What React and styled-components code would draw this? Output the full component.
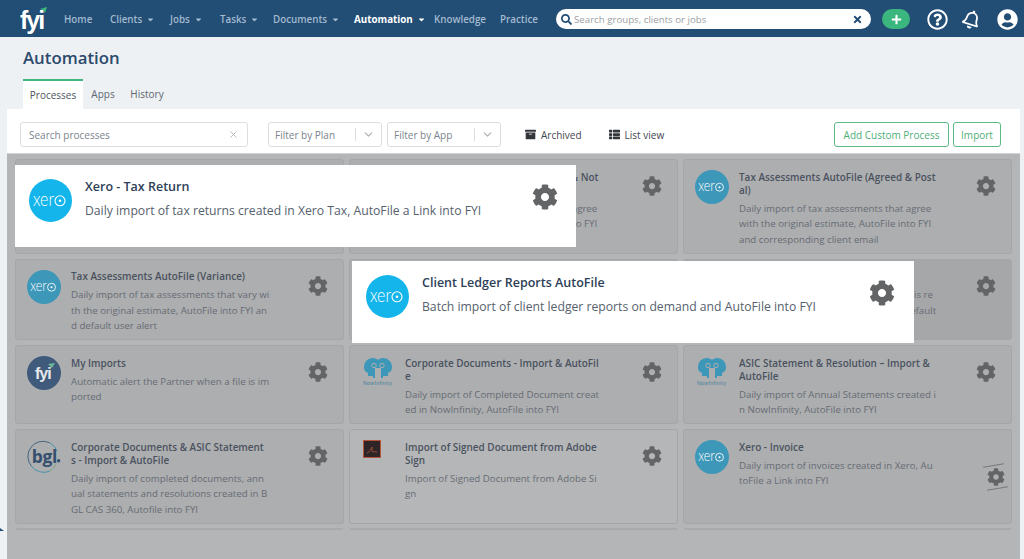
import React from "react";
import styled, { createGlobalStyle } from "styled-components";
import {
  FaArchive,
  FaCaretDown,
  FaCog,
  FaPlus,
  FaRegBell,
  FaRegQuestionCircle,
  FaSearch,
  FaThList,
  FaTimes,
  FaUserCircle,
} from "react-icons/fa";
import { ChevronDown, X } from "lucide-react";

const GlobalStyle = createGlobalStyle`
  html, body {
    margin: 0;
    padding: 0;
    height: 559px;
    overflow: hidden;
    background: #eef1f4;
    font-family: "Open Sans", "Noto Sans", "Liberation Sans", sans-serif;
  }
  * { box-sizing: border-box; }
`;

const Page = styled.div`
  width: 1024px;
  height: 559px;
  display: flex;
  flex-direction: column;
  overflow: hidden;
`;

const Nav = styled.header`
  height: 37px;
  flex: none;
  background: #224d75;
  display: flex;
  align-items: center;
  padding: 1px 0 0 20px;
`;

const NavLinks = styled.nav`
  display: flex;
  margin-left: 16px;
  width: 492px;
`;

const NavLink = styled.a`
  display: flex;
  align-items: center;
  gap: 4px;
  width: ${(p) => p.$w}px;
  font-size: 9.8px;
  white-space: nowrap;
  color: ${(p) => (p.$active ? "#ffffff" : "#a3bacf")};
  font-weight: ${(p) => (p.$active ? 700 : 600)};
  svg { font-size: 9px; flex: none; }
`;

const GlobalSearch = styled.div`
  width: 315px;
  height: 20px;
  border-radius: 10px;
  background: #fff;
  display: flex;
  align-items: center;
  padding: 0 8px 0 5px;
  color: #224d75;
  font-size: 11px;
  svg { flex: none; }
`;

const GlobalSearchText = styled.span`
  flex: 1;
  margin-left: 2px;
  color: #9b9fa3;
  font-size: 9.7px;
`;

const AddButton = styled.button`
  width: 28px;
  height: 20px;
  margin-left: 11px;
  border: 0;
  border-radius: 10px;
  background: #3cb67f;
  color: #fff;
  display: flex;
  align-items: center;
  justify-content: center;
  padding: 0;
  font-size: 11px;
`;

const NavIcons = styled.div`
  display: flex;
  align-items: center;
  margin-left: 17px;
  color: #fff;
`;

const HelpIcon = styled(FaRegQuestionCircle)`
  font-size: 21px;
`;

const BellIcon = styled(FaRegBell)`
  font-size: 19px;
  margin-left: 14px;
  transform: rotate(18deg);
`;

const UserIcon = styled(FaUserCircle)`
  font-size: 21px;
  margin-left: 16px;
`;

const PageTitle = styled.h1`
  margin: 0;
  padding: 11px 0 0 23px;
  height: 42px;
  font-size: 16.8px;
  line-height: 20px;
  font-weight: 600;
  color: #2c4a6c;
`;

const Tabs = styled.div`
  display: flex;
  height: 30px;
  padding-left: 23px;
`;

const Tab = styled.div`
  width: ${(p) => p.$w}px;
  font-size: 10px;
  color: #5d6670;
  text-align: center;
  line-height: ${(p) => (p.$active ? 29 : 30)}px;
  ${(p) =>
    p.$active &&
    `background: #fff; border-top: 2px solid #3fb77f; color: #4d5660;`}
`;

const Toolbar = styled.div`
  width: 1013px;
  margin-left: 7px;
  height: 44px;
  flex: none;
  background: #fff;
  display: flex;
  align-items: flex-start;
  padding: 13px 19px 0 13px;
  > * { flex: none; }
`;

const SearchInput = styled.div`
  width: 228px;
  height: 25px;
  border: 1px solid #dcdfe2;
  border-radius: 3px;
  display: flex;
  align-items: center;
  justify-content: space-between;
  padding: 0 8px;
  font-size: 10px;
  color: #7b848d;
  margin-right: 20px;
`;

const FilterSelect = styled.div`
  width: 114px;
  height: 25px;
  border: 1px solid #dcdfe2;
  border-radius: 3px;
  display: flex;
  align-items: center;
  padding-left: 6px;
  margin-right: 5px;
  font-size: 10px;
  color: #7b848d;
`;

const FilterLabel = styled.span`
  flex: 1;
`;

const FilterCaret = styled.span`
  width: 26px;
  height: 13px;
  border-left: 1px solid #dcdfe2;
  display: flex;
  align-items: center;
  justify-content: center;
  color: #a9afb5;
`;

const ToolLink = styled.div`
  height: 25px;
  display: flex;
  align-items: center;
  gap: 5px;
  margin-left: ${(p) => p.$gap}px;
  font-size: 10px;
  white-space: nowrap;
  color: #3f4650;
  svg { color: #33363b; font-size: 11px; }
`;

const ActionGroup = styled.div`
  display: flex;
  gap: 4px;
  margin-left: auto;
`;

const OutlineButton = styled.button`
  height: 25px;
  width: ${(p) => p.$w}px;
  padding: 0;
  background: #fff;
  border: 1px solid #5cbb85;
  border-radius: 3px;
  color: #4fae78;
  font-family: inherit;
  font-size: 10px;
`;

const Dimmed = styled.main`
  position: relative;
  width: 1013px;
  margin-left: 7px;
  flex: 1;
  background: #b4b5b7;
  border-top: 1px solid #d2d3d4;
  padding: 5px 0 0 8px;
`;

const CardGrid = styled.div`
  display: grid;
  grid-template-columns: repeat(3, 329px);
  column-gap: 5px;
  row-gap: 5px;
`;

const Card = styled.article`
  display: flex;
  align-items: flex-start;
  padding: 10px 0 5.5px 11px;
  border: 1px solid #a5a6a7;
  border-radius: 3px;
  background: ${(p) => p.$tone || "#adaeaf"};
`;

const LogoSlot = styled.div`
  width: 34px;
  height: 34px;
  flex: none;
  display: flex;
  align-items: center;
  justify-content: center;
`;

const CardText = styled.div`
  width: 197px;
  margin: 0.5px 0 0 10px;
  flex: none;
  white-space: pre;
`;

const CardTitle = styled.h3`
  margin: 0 0 4px;
  font-size: 9.95px;
  line-height: 13px;
  font-weight: 600;
  color: #4a525f;
`;

const CardDesc = styled.p`
  margin: 0;
  font-size: 9.7px;
  line-height: 15.5px;
  color: #666c75;
`;

const Gear = styled(FaCog)`
  flex: none;
  font-size: 20px;
  color: #636466;
  margin: 6px 0 0 40px;
`;

const SlippedGear = styled.div`
  position: relative;
  flex: none;
  width: 20px;
  height: 20px;
  margin: 27px 0 0 50px;
  color: #636466;
  font-size: 18px;
  display: flex;
  align-items: center;
  justify-content: center;
  &::before, &::after {
    content: "";
    position: absolute;
    width: 21px;
    height: 1px;
    background: #77787a;
    transform: rotate(-10deg);
  }
  &::before { top: -2px; left: -3px; }
  &::after { bottom: -2px; left: 1px; }
`;

const PeekEdge = styled.div`
  height: 2px;
  margin: -1px 1px 0;
  background: #a9aaab;
`;

const Spotlight = styled.article`
  position: absolute;
  left: ${(p) => p.$x}px;
  top: ${(p) => p.$y}px;
  width: ${(p) => p.$w}px;
  height: 82px;
  background: #fff;
  display: flex;
  align-items: flex-start;
  padding: 14px 0 0 14px;
`;

const SpotlightLogo = styled.div`
  width: 43px;
  height: 43px;
  flex: none;
`;

const SpotlightText = styled.div`
  flex: none;
  width: 447px;
  margin-left: 13px;
`;

const SpotlightTitle = styled.h3`
  margin: 0 0 8px;
  font-size: 12.5px;
  line-height: 16px;
  font-weight: 600;
  color: #2d4057;
`;

const SpotlightDesc = styled.p`
  margin: 0;
  font-size: 12.2px;
  line-height: 16px;
  color: #56616d;
`;

const SpotlightGear = styled(FaCog)`
  flex: none;
  font-size: 26px;
  color: #636466;
  margin: 5px 0 0 0;
`;

const CornerMark = styled.div`
  position: absolute;
  left: 0;
  top: 528px;
  width: 0;
  height: 0;
  border-left: 4px solid #224d75;
  border-top: 3px solid transparent;
`;

function XeroLogo({ size = 34, color = "#3d97b8" }) {
  return (
    <svg width={size} height={size} viewBox="0 0 43 43">
      <circle cx="21.5" cy="21.5" r="21.5" fill={color} />
      <text x="4" y="26.6" fontFamily="Lato, sans-serif" fontWeight="300" fontSize="19" fill="#fff" textLength="21" lengthAdjust="spacingAndGlyphs">
        xer
      </text>
      <circle cx="31" cy="21.8" r="5" fill="none" stroke="#fff" strokeWidth="1.1" />
      <circle cx="31" cy="21.8" r="1.3" fill="#fff" />
    </svg>
  );
}

function FyiBadge() {
  return (
    <svg width="34" height="34" viewBox="0 0 34 34">
      <circle cx="17" cy="17" r="17" fill="#3f5a7a" />
      <text x="8" y="23" fontFamily="Liberation Sans, sans-serif" fontWeight="700" fontSize="16" letterSpacing="-1" fill="#e6e8ea">
        fyi
      </text>
      <path d="M21 8l7-1-3 5z" fill="#6fb79a" />
    </svg>
  );
}

function BglLogo() {
  return (
    <svg width="36" height="34" viewBox="0 0 36 34">
      <path d="M24 2A16 16 0 0 0 5 27" fill="none" stroke="#3f6280" strokeWidth="1" />
      <path d="M5 27A16 16 0 0 0 24 32" fill="none" stroke="#3f93a8" strokeWidth="1" />
      <path d="M24 32A16 16 0 0 0 31 24" fill="none" stroke="#7f9f7a" strokeWidth="1" />
      <path d="M24 2A16 16 0 0 1 32 11" fill="none" stroke="#3f93a8" strokeWidth="1" />
      <text x="5" y="23" fontFamily="Open Sans, sans-serif" fontWeight="700" fontSize="18.5" letterSpacing="-0.3" fill="#34506e">
        bgl
      </text>
      <circle cx="33.5" cy="21" r="1.8" fill="#34506e" />
    </svg>
  );
}

function NowInfinityLogo() {
  return (
    <svg width="30" height="30" viewBox="0 0 30 30">
      <path d="M1 9C1 3 6 0 10 0c2 0 4 1 5 2 1-1 3-2 5-2 4 0 9 3 9 9 0 4-2 5-4 6v3h-5v2h-2V10h-6v10h-2v-2H5v-3C3 14 1 13 1 9z" fill="#3d97b8" />
      <circle cx="11" cy="7.5" r="2.2" fill="none" stroke="#adaeaf" strokeWidth="1" />
      <circle cx="19" cy="7.5" r="2.2" fill="none" stroke="#adaeaf" strokeWidth="1" />
      <text x="0" y="27" fontFamily="Liberation Sans, sans-serif" fontSize="5.2" fill="#3f7fa0" textLength="29">
        NowInfinity
      </text>
    </svg>
  );
}

function AdobeLogo() {
  return (
    <svg width="34" height="34" viewBox="0 0 34 34">
      <rect x="2.5" y="0.5" width="17" height="17" fill="#2f2527" stroke="#b8533a" />
      <path d="M6 13c3-1 4-4 5-6 0 3 0 5 1 5s1-1 4 0" fill="none" stroke="#b8533a" strokeWidth="0.8" />
    </svg>
  );
}

function FyiMark() {
  return (
    <svg width="28" height="30" viewBox="0 0 28 30">
      <text x="0" y="25" fontFamily="Liberation Sans, sans-serif" fontWeight="700" fontSize="25" letterSpacing="-2" fill="#fff">
        fyi
      </text>
      <path d="M20 5l7-2-2 6-1.5-2.5z" fill="#3cb67f" />
    </svg>
  );
}

const navItems = [
  { label: "Home", w: 46 },
  { label: "Clients", w: 60, caret: true },
  { label: "Jobs", w: 50, caret: true },
  { label: "Tasks", w: 53, caret: true },
  { label: "Documents", w: 81, caret: true },
  { label: "Automation", w: 80, caret: true, active: true },
  { label: "Knowledge", w: 66 },
  { label: "Practice", w: 56 },
];

// the app breaks these mid-word, so the line ends are kept in the strings
const cards = [
  { logo: "xero", title: "Xero - Tax Return", desc: "Daily import of tax returns created in Xero Ta\nx, AutoFile a Link into FYI" },
  { logo: "xero", title: "Tax Assessments AutoFile (Agreed & Not\nPosted)", desc: "Daily import of tax assessments that agree\nwith the original estimate, AutoFile into FYI\nand corresponding client" },
  { logo: "xero", title: "Tax Assessments AutoFile (Agreed & Post\nal)", desc: "Daily import of tax assessments that agree\nwith the original estimate, AutoFile into FYI\nand corresponding client email" },
  { logo: "xero", title: "Tax Assessments AutoFile (Variance)", desc: "Daily import of tax assessments that vary wi\nth the original estimate, AutoFile into FYI an\nd default user alert" },
  { logo: "xero", title: "Client Ledger Reports AutoFile", desc: "Batch import of client ledger reports on dema\nnd and AutoFile into FYI" },
  { logo: "xero", tone: "#a6a7a8", title: "Client Reports", desc: "Daily import of tax assessments which is re\nceived and AutoFile into FYI with the default\nuser alert" },
  { logo: "fyi", title: "My Imports", desc: "Automatic alert the Partner when a file is im\nported" },
  { logo: "now", title: "Corporate Documents - Import & AutoFil\ne", desc: "Daily import of Completed Document creat\ned in NowInfinity, AutoFile into FYI" },
  { logo: "now", title: "ASIC Statement & Resolution – Import &\nAutoFile", desc: "Daily import of Annual Statements created i\nn NowInfinity, AutoFile into FYI" },
  { logo: "bgl", title: "Corporate Documents & ASIC Statement\ns - Import & AutoFile", desc: "Daily import of completed documents, ann\nual statements and resolutions created in B\nGL CAS 360, Autofile into FYI" },
  { logo: "adobe", tone: "#b5b6b7", title: "Import of Signed Document from Adobe\nSign", desc: "Import of Signed Document from Adobe Si\ngn" },
  { logo: "xero", slipped: true, title: "Xero - Invoice", desc: "Daily import of invoices created in Xero, Au\ntoFile a Link into FYI" },
];

const logos = {
  xero: <XeroLogo />,
  fyi: <FyiBadge />,
  now: <NowInfinityLogo />,
  bgl: <BglLogo />,
  adobe: <AdobeLogo />,
};

export default function App() {
  return (
    <Page>
      <GlobalStyle />
      <Nav>
        <FyiMark />
        <NavLinks>
          {navItems.map((item) => (
            <NavLink key={item.label} $w={item.w} $active={item.active}>
              {item.label}
              {item.caret && <FaCaretDown />}
            </NavLink>
          ))}
        </NavLinks>
        <GlobalSearch>
          <FaSearch />
          <GlobalSearchText>Search groups, clients or jobs</GlobalSearchText>
          <FaTimes />
        </GlobalSearch>
        <AddButton>
          <FaPlus />
        </AddButton>
        <NavIcons>
          <HelpIcon />
          <BellIcon />
          <UserIcon />
        </NavIcons>
      </Nav>

      <PageTitle>Automation</PageTitle>
      <Tabs>
        <Tab $w={60} $active>Processes</Tab>
        <Tab $w={40}>Apps</Tab>
        <Tab $w={48}>History</Tab>
      </Tabs>

      <Toolbar>
        <SearchInput>
          Search processes
          <X size={11} color="#b0b5ba" />
        </SearchInput>
        <FilterSelect>
          <FilterLabel>Filter by Plan</FilterLabel>
          <FilterCaret><ChevronDown size={13} /></FilterCaret>
        </FilterSelect>
        <FilterSelect>
          <FilterLabel>Filter by App</FilterLabel>
          <FilterCaret><ChevronDown size={13} /></FilterCaret>
        </FilterSelect>
        <ToolLink $gap={19}><FaArchive />Archived</ToolLink>
        <ToolLink $gap={27}><FaThList />List view</ToolLink>
        <ActionGroup>
          <OutlineButton $w={115}>Add Custom Process</OutlineButton>
          <OutlineButton $w={48}>Import</OutlineButton>
        </ActionGroup>
      </Toolbar>

      <Dimmed>
        <CardGrid>
          {cards.map((card) => (
            <Card key={card.title} $tone={card.tone}>
              <LogoSlot>{logos[card.logo]}</LogoSlot>
              <CardText>
                <CardTitle>{card.title}</CardTitle>
                <CardDesc>{card.desc}</CardDesc>
              </CardText>
              {card.slipped ? (
                <SlippedGear><FaCog /></SlippedGear>
              ) : (
                <Gear />
              )}
            </Card>
          ))}
          <PeekEdge />
          <PeekEdge />
          <PeekEdge />
        </CardGrid>

        <Spotlight $x={8} $y={11} $w={561}>
          <SpotlightLogo><XeroLogo size={43} color="#13b5ea" /></SpotlightLogo>
          <SpotlightText>
            <SpotlightTitle>Xero - Tax Return</SpotlightTitle>
            <SpotlightDesc>Daily import of tax returns created in Xero Tax, AutoFile a Link into FYI</SpotlightDesc>
          </SpotlightText>
          <SpotlightGear />
        </Spotlight>

        <Spotlight $x={345} $y={107} $w={562}>
          <SpotlightLogo><XeroLogo size={43} color="#13b5ea" /></SpotlightLogo>
          <SpotlightText>
            <SpotlightTitle>Client Ledger Reports AutoFile</SpotlightTitle>
            <SpotlightDesc>Batch import of client ledger reports on demand and AutoFile into FYI</SpotlightDesc>
          </SpotlightText>
          <SpotlightGear />
        </Spotlight>
      </Dimmed>
      <CornerMark />
    </Page>
  );
}
